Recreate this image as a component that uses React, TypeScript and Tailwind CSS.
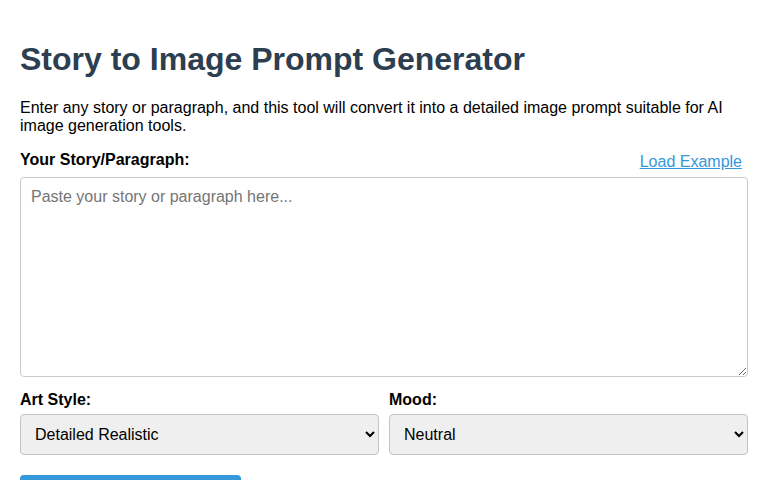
import { useState } from "react";

const App = () => {
  const [story, setStory] = useState("");

  return (
    <div className="min-h-screen bg-white p-5 font-['Liberation_Sans',Arial,sans-serif] text-base text-black">
      <h1 className="mt-[21px] mb-[21px] text-[32px] font-bold leading-[37px] text-[#2c3e50]">
        Story to Image Prompt Generator
      </h1>
      <p className="mb-4 leading-[18px]">
        Enter any story or paragraph, and this tool will convert it into a detailed image prompt suitable for AI
        image generation tools.
      </p>

      <div className="mb-[14px]">
        <div className="mb-[5px] flex h-[21px] items-start justify-between">
          <label className="font-bold leading-[18px]">Your Story/Paragraph:</label>
          <button
            className="mr-[6px] mt-[2px] cursor-pointer leading-[18px] text-[#3498db] underline"
            onClick={() => setStory("Once upon a time, in a quiet village by the sea...")}
          >
            Load Example
          </button>
        </div>
        <textarea
          value={story}
          onChange={(e) => setStory(e.target.value)}
          placeholder="Paste your story or paragraph here..."
          className="block h-[200px] w-full rounded border border-[#ccc] p-[10px] text-base leading-[18px] placeholder:text-[#757575]"
        />
      </div>

      <div className="grid grid-cols-2 gap-[10px]">
        <div>
          <label className="mb-[5px] block font-bold leading-[18px]">Art Style:</label>
          <select className="h-[41px] w-full rounded border border-[#c4c4c4] bg-[#efefef] px-[10px] text-base">
            <option>Detailed Realistic</option>
            <option>Digital Painting</option>
            <option>Watercolor</option>
            <option>Anime</option>
          </select>
        </div>
        <div>
          <label className="mb-[5px] block font-bold leading-[18px]">Mood:</label>
          <select className="h-[41px] w-full rounded border border-[#c4c4c4] bg-[#efefef] px-[10px] text-base">
            <option>Neutral</option>
            <option>Happy</option>
            <option>Dark</option>
            <option>Mysterious</option>
          </select>
        </div>
      </div>

      <button className="mt-5 h-[44px] w-[221px] rounded bg-[#3498db] px-5 text-base text-white">
        Generate Image Prompt
      </button>
    </div>
  );
};

export default App;
